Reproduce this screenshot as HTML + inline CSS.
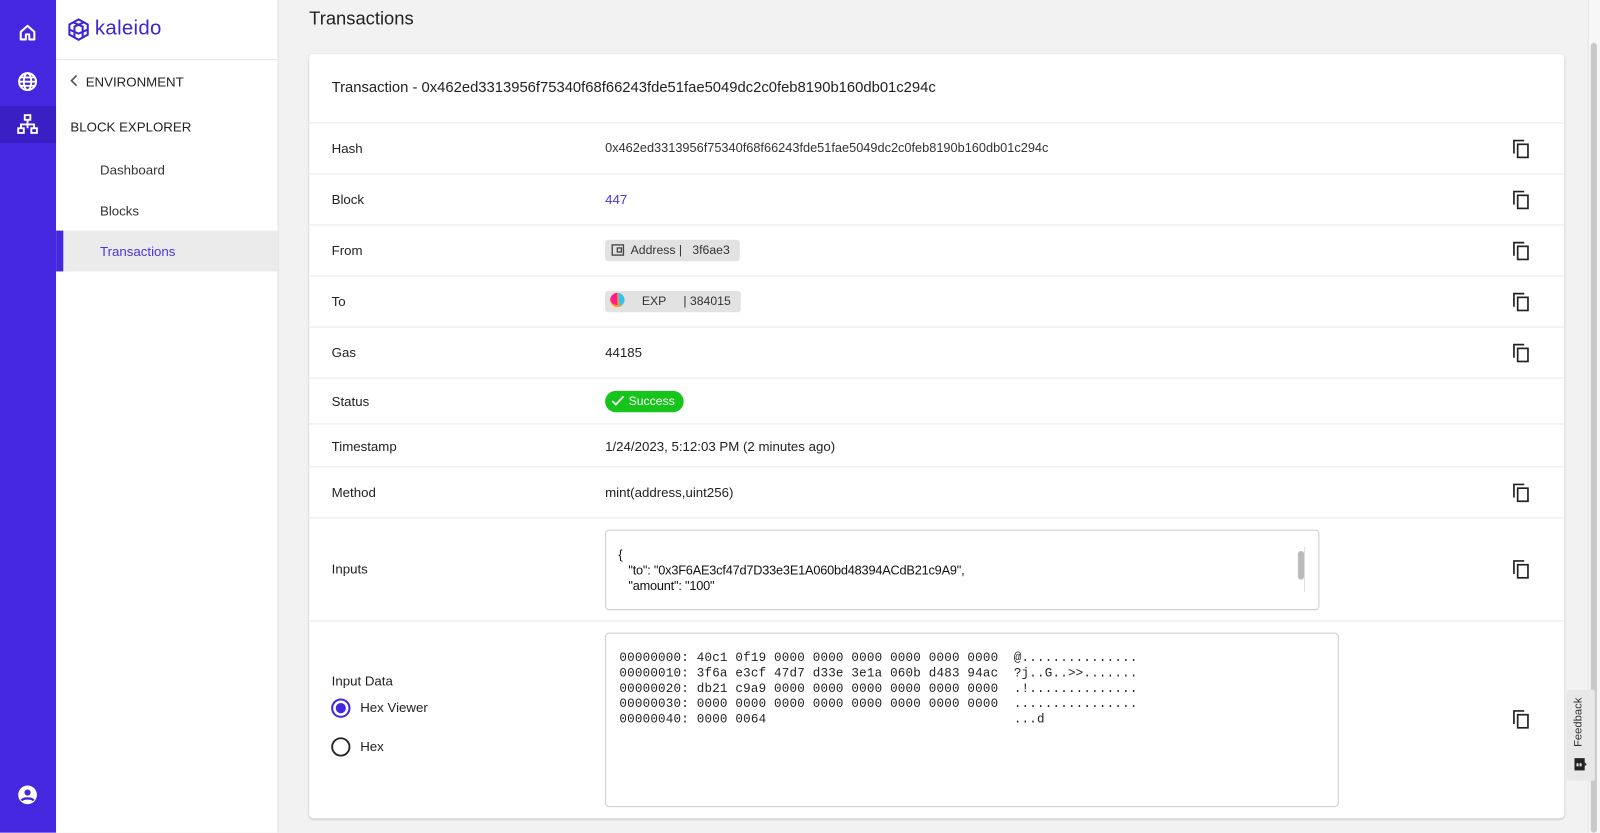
<!DOCTYPE html>
<html><head><meta charset="utf-8"><style>
*{box-sizing:border-box;margin:0;padding:0}
html,body{width:1600px;height:832px;overflow:hidden;background:#f2f2f2}
#wrap{position:absolute;left:0;top:0;width:1568px;height:816px;transform:scale(1.0204);transform-origin:0 0;font-family:"Liberation Sans",sans-serif;color:#222}
.rail{position:absolute;left:0;top:0;width:55px;height:816px;background:#4527df}
.rail .sel{position:absolute;left:0;top:104px;width:55px;height:36px;background:#3a1fc4}
.rail svg{position:absolute;left:16px}
.side{position:absolute;left:55px;top:0;width:218px;height:816px;background:#fff;border-right:1px solid #e0e0e0}
.logo{height:59px;border-bottom:1px solid #e6e6e6;position:relative}
.logo span{position:absolute;left:38px;top:17px;font-size:20px;color:#3b25d6;letter-spacing:.3px}
.side .it{position:absolute;font-size:13px}
.main{position:absolute;left:273px;top:0;width:1295px;height:816px}
h1{position:absolute;left:30px;top:8px;font-size:18px;font-weight:normal;color:#222}
.card{position:absolute;left:30px;top:53px;width:1230px;height:749px;background:#fff;border-radius:4px;box-shadow:0 1px 2px rgba(0,0,0,.2)}
.row{position:absolute;left:0;width:1230px;border-top:1px solid #e8e8e8;font-size:13px}
.row .l{position:absolute;left:22px}
.row .v{position:absolute;left:290px}
.cp{position:absolute;left:1177px}
.chip{display:inline-block;background:#e2e2e2;border-radius:3px;height:21px;line-height:21px;font-size:12px;color:#333;padding:0 10px 0 6px}
.scroll{position:absolute;left:1556px;top:0;width:12px;height:816px;background:#f7f7f7;border-left:1px solid #e4e4e4}
.scroll div{position:absolute;left:2px;top:42px;width:6px;height:774px;background:#c8c8c8;border-radius:3px}
.fb{position:absolute;left:1535px;top:676px;width:28px;height:89px;background:#e8e8e8;border-radius:4px 0 0 4px}
</style></head><body><div id="wrap">
<div class="rail">
<svg style="top:22px" width="22" height="20" viewBox="0 0 24 24"><path d="M4 11 L12 4 L20 11 V20 H14 V14 H10 V20 H4 Z" fill="none" stroke="#fff" stroke-width="2.4" stroke-linejoin="round"/></svg>
<div class="sel"></div>
<svg style="top:69px" width="22" height="22" viewBox="0 0 24 24"><circle cx="12" cy="12" r="9" fill="none" stroke="#fff" stroke-width="2.2"/><ellipse cx="12" cy="12" rx="4" ry="9" fill="none" stroke="#fff" stroke-width="2"/><path d="M3 12H21M4.5 7.5H19.5M4.5 16.5H19.5" stroke="#fff" stroke-width="2"/></svg>
<svg style="top:111px" width="22" height="22" viewBox="0 0 24 24" fill="none" stroke="#fff" stroke-width="2"><rect x="9" y="2" width="6" height="5"/><rect x="2" y="16" width="6" height="5"/><rect x="16" y="16" width="6" height="5"/><path d="M12 7V12M5 16V12H19V16M12 12V16"/></svg>
<svg style="top:768px" width="22" height="22" viewBox="0 0 24 24"><circle cx="12" cy="12" r="10" fill="#fff"/><circle cx="12" cy="9.5" r="3.3" fill="#4527df"/><path d="M5.5 18c2-3 11-3 13 0" stroke="#4527df" stroke-width="2.5" fill="none"/></svg>
</div>
<div class="side">
<div class="logo"><svg style="position:absolute;left:10px;top:17px" width="24" height="24" viewBox="0 0 24 24" fill="none" stroke="#3b25d6" stroke-width="2"><path d="M12 2L21 7V17L12 22L3 17V7Z"/><path d="M7 5L16 9V19M17 5L8 9V19M3 12L12 16L21 12"/></svg><span>kaleido</span></div>
<svg style="position:absolute;left:13px;top:73px" width="10" height="12" viewBox="0 0 10 12"><path d="M7 1L2 6L7 11" stroke="#555" stroke-width="1.6" fill="none"/></svg>
<div class="it" style="left:29px;top:73px">ENVIRONMENT</div>
<div class="it" style="left:14px;top:117px">BLOCK EXPLORER</div>
<div class="it" style="left:43px;top:159px;color:#333">Dashboard</div>
<div class="it" style="left:43px;top:199px;color:#333">Blocks</div>
<div style="position:absolute;left:0;top:226px;width:217px;height:40px;background:#ebebeb;border-left:7px solid #4527df"></div>
<div class="it" style="left:43px;top:239px;color:#4b34d9">Transactions</div>
</div>
<div class="main">
<h1>Transactions</h1>
<div class="card">
<div style="position:absolute;left:22px;top:25px;font-size:14.5px">Transaction - 0x462ed3313956f75340f68f66243fde51fae5049dc2c0feb8190b160db01c294c</div>
<div class="row" style="top:67px;height:50px"><span class="l" style="top:17px">Hash</span><span class="v" style="top:17px;font-size:12.5px;color:#333">0x462ed3313956f75340f68f66243fde51fae5049dc2c0feb8190b160db01c294c</span><svg class="cp" style="top:14px" width="22" height="22" viewBox="0 0 24 24" fill="none" stroke="#222" stroke-width="1.8"><path d="M4 17V3H15"/><rect x="8" y="7" width="11" height="14"/></svg></div>
<div class="row" style="top:117px;height:50px"><span class="l" style="top:17px">Block</span><span class="v" style="top:17px;color:#4b34d9">447</span><svg class="cp" style="top:14px" width="22" height="22" viewBox="0 0 24 24" fill="none" stroke="#222" stroke-width="1.8"><path d="M4 17V3H15"/><rect x="8" y="7" width="11" height="14"/></svg></div>
<div class="row" style="top:167px;height:50px"><span class="l" style="top:17px">From</span><span class="v" style="top:14px"><span class="chip"><svg width="13" height="12" viewBox="0 0 13 12" style="vertical-align:-2px;margin-right:6px" fill="none" stroke="#444" stroke-width="1.3"><rect x="1" y="1" width="11" height="10"/><rect x="6" y="4" width="4" height="4"/></svg>Address |&nbsp;&nbsp; 3f6ae3</span></span><svg class="cp" style="top:14px" width="22" height="22" viewBox="0 0 24 24" fill="none" stroke="#222" stroke-width="1.8"><path d="M4 17V3H15"/><rect x="8" y="7" width="11" height="14"/></svg></div>
<div class="row" style="top:217px;height:50px"><span class="l" style="top:17px">To</span><span class="v" style="top:14px"><span class="chip" style="padding-left:4px"><svg width="16" height="16" viewBox="0 0 16 16" style="vertical-align:-3px;margin-right:16px"><circle cx="8" cy="8" r="7" fill="#ff9a1f"/><path d="M8 1A7 7 0 0 0 1 8A7 7 0 0 0 8 13Z" fill="#ff1d8e"/><path d="M9 1A7 7 0 0 1 15 8A7 7 0 0 1 10 14Z" fill="#2ec5f5"/></svg>EXP&nbsp;&nbsp;&nbsp;&nbsp;&nbsp;| 384015</span></span><svg class="cp" style="top:14px" width="22" height="22" viewBox="0 0 24 24" fill="none" stroke="#222" stroke-width="1.8"><path d="M4 17V3H15"/><rect x="8" y="7" width="11" height="14"/></svg></div>
<div class="row" style="top:267px;height:50px"><span class="l" style="top:17px">Gas</span><span class="v" style="top:17px">44185</span><svg class="cp" style="top:14px" width="22" height="22" viewBox="0 0 24 24" fill="none" stroke="#222" stroke-width="1.8"><path d="M4 17V3H15"/><rect x="8" y="7" width="11" height="14"/></svg></div>
<div class="row" style="top:317px;height:45px"><span class="l" style="top:15px">Status</span><span class="v" style="top:12px;background:#17c41c;color:#fff;border-radius:11px;height:21px;line-height:21px;padding:0 9px 0 6px;font-size:12px"><svg width="13" height="11" viewBox="0 0 13 11" style="vertical-align:-1px;margin-right:4px"><path d="M1 6L4.5 9.5L12 1.5" stroke="#fff" stroke-width="1.7" fill="none"/></svg>Success</span></div>
<div class="row" style="top:362px;height:42px"><span class="l" style="top:14px">Timestamp</span><span class="v" style="top:14px">1/24/2023, 5:12:03 PM (2 minutes ago)</span></div>
<div class="row" style="top:404px;height:50px"><span class="l" style="top:17px">Method</span><span class="v" style="top:17px">mint(address,uint256)</span><svg class="cp" style="top:14px" width="22" height="22" viewBox="0 0 24 24" fill="none" stroke="#222" stroke-width="1.8"><path d="M4 17V3H15"/><rect x="8" y="7" width="11" height="14"/></svg></div>
<div class="row" style="top:454px;height:101px"><span class="l" style="top:42px">Inputs</span>
<div style="position:absolute;left:290px;top:11px;width:700px;height:79px;border:1px solid #ccc;border-radius:4px;font-size:12.5px;line-height:15px;padding:17px 12px;color:#111;letter-spacing:-.2px">{<br>&nbsp;&nbsp;&nbsp;"to": "0x3F6AE3cf47d7D33e3E1A060bd48394ACdB21c9A9",<br>&nbsp;&nbsp;&nbsp;"amount": "100"<div style="position:absolute;right:14px;top:20px;width:6px;height:28px;background:#bbb;border-radius:3px"></div><div style="position:absolute;right:13px;top:16px;width:1px;height:44px;background:#ddd"></div></div>
<svg class="cp" style="top:39px" width="22" height="22" viewBox="0 0 24 24" fill="none" stroke="#222" stroke-width="1.8"><path d="M4 17V3H15"/><rect x="8" y="7" width="11" height="14"/></svg></div>
<div class="row" style="top:555px;height:194px"><span class="l" style="top:51px">Input Data</span>
<svg style="position:absolute;left:21px;top:75px" width="20" height="20"><circle cx="10" cy="10" r="8.5" fill="none" stroke="#4527df" stroke-width="2"/><circle cx="10" cy="10" r="5" fill="#4527df"/></svg><span style="position:absolute;left:50px;top:77px">Hex Viewer</span>
<svg style="position:absolute;left:21px;top:113px" width="20" height="20"><circle cx="10" cy="10" r="8.5" fill="none" stroke="#222" stroke-width="1.8"/></svg><span style="position:absolute;left:50px;top:115px">Hex</span>
<div style="position:absolute;left:290px;top:11px;width:719px;height:171px;border:1px solid #ccc;border-radius:4px;padding:17px 13px;font-family:'Liberation Mono',monospace;font-size:12.3px;line-height:15px;letter-spacing:.2px;white-space:pre;color:#222">00000000: 40c1 0f19 0000 0000 0000 0000 0000 0000  @...............
00000010: 3f6a e3cf 47d7 d33e 3e1a 060b d483 94ac  ?j..G..&gt;&gt;.......
00000020: db21 c9a9 0000 0000 0000 0000 0000 0000  .!..............
00000030: 0000 0000 0000 0000 0000 0000 0000 0000  ................
00000040: 0000 0064                                ...d</div>
<svg class="cp" style="top:85px" width="22" height="22" viewBox="0 0 24 24" fill="none" stroke="#222" stroke-width="1.8"><path d="M4 17V3H15"/><rect x="8" y="7" width="11" height="14"/></svg></div>
</div>
</div>
<div class="scroll"><div></div></div>
<div class="fb"><span style="position:absolute;left:6px;top:56px;transform:rotate(-90deg);transform-origin:0 0;font-size:11px;color:#333">Feedback</span><svg style="position:absolute;left:7px;top:66px" width="14" height="14" viewBox="0 0 14 14"><rect x="1" y="1" width="10" height="12" fill="#222"/><path d="M11 5L13 7L11 9Z" fill="#222"/><rect x="3" y="6" width="2" height="3" fill="#e8e8e8"/><rect x="6" y="6" width="2" height="3" fill="#e8e8e8"/></svg></div>
</div></body></html>
